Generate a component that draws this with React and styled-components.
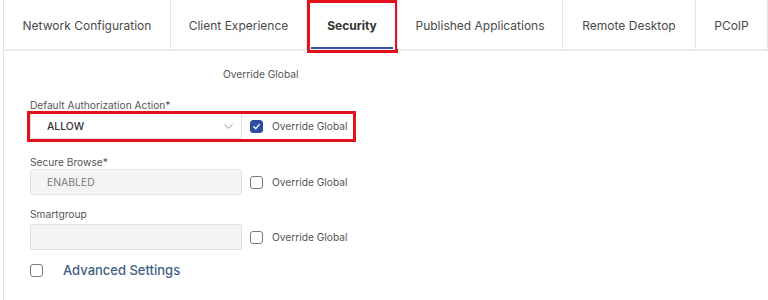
import React from "react";
import styled, { createGlobalStyle, css } from "styled-components";
import { ChevronDown } from "lucide-react";

const GlobalStyle = createGlobalStyle`
  body {
    margin: 0;
    background: #fff;
    font-family: Inter, "Liberation Sans", Arial, sans-serif;
    color: #444;
  }
`;

const Page = styled.div`
  width: 765px;
  height: 300px;
  margin-left: 3px;
  overflow: hidden;
`;

const TabBar = styled.div`
  display: flex;
  height: 49px;
  border-bottom: 2px solid #ececec;
  border-right: 1px solid #e4e4e4;
`;

const Tab = styled.div`
  position: relative;
  display: flex;
  align-items: center;
  justify-content: center;
  width: ${(p) => p.$w}px;
  box-sizing: border-box;
  border-left: 1px solid #e4e4e4;
  padding-top: 2px;
  font-size: 12px;
  color: #4a4a4a;
  white-space: nowrap;
  ${(p) =>
    p.$active &&
    css`
      font-weight: 700;
      color: #333;
      &::after {
        content: "";
        position: absolute;
        left: 4px;
        right: 4px;
        bottom: 0;
        height: 2px;
        background: #3a55a0;
      }
    `}
`;

// red annotation frame drawn over the screenshot
const Mark = styled.div`
  position: absolute;
  left: ${(p) => p.$x || 0}px;
  top: ${(p) => p.$y || 0}px;
  width: ${(p) => p.$w}px;
  height: ${(p) => p.$h}px;
  box-sizing: border-box;
  border: 3px solid #e0121b;
  pointer-events: none;
`;

const Panel = styled.div`
  border-left: 1px solid #e4e4e4;
  padding-left: 26px;
  height: 250px;
`;

const ColumnHead = styled.div`
  padding: 17px 0 0 193px;
  height: 24px;
  font-size: 10.2px;
  color: #555;
`;

const Field = styled.div`
  margin-top: ${(p) => p.$mt}px;
`;

const Label = styled.div`
  font-size: 10.2px;
  color: #555;
  height: 14px;
  line-height: 14px;
`;

const Row = styled.div`
  position: relative;
  display: flex;
  align-items: center;
  gap: 8px;
  margin-top: ${(p) => p.$mt || 0}px;
`;

const Box = styled.div`
  display: flex;
  align-items: center;
  justify-content: space-between;
  box-sizing: border-box;
  width: 212px;
  height: 26px;
  padding: 0 5px 0 16px;
  border: 1px solid ${(p) => (p.$disabled ? "#e2e2e2" : "#dedede")};
  border-radius: 2px;
  background: ${(p) => (p.$disabled ? "#f4f4f4" : "#fff")};
  font-size: 10.4px;
  color: ${(p) => (p.$disabled ? "#7a7a7a" : "#333")};
  font-weight: ${(p) => (p.$disabled ? 400 : 500)};
`;

const Check = styled.span`
  display: inline-flex;
  align-items: center;
  justify-content: center;
  width: 13px;
  height: 13px;
  box-sizing: border-box;
  border-radius: 3px;
  border: 1.5px solid ${(p) => (p.$on ? "#2b4ea3" : "#7a7a7a")};
  background: ${(p) => (p.$on ? "#2b4ea3" : "#fff")};
  flex: none;
`;

const CheckLabel = styled.span`
  font-size: 10.2px;
  color: #555;
`;

const Option = styled.div`
  display: flex;
  align-items: center;
  gap: 9px;
`;

const Advanced = styled.div`
  display: flex;
  align-items: center;
  gap: 20px;
  margin-top: 13px;
  height: 14px;
`;

const AdvancedText = styled.span`
  font-size: 13px;
  font-weight: 500;
  color: #3f5f84;
`;

function Checkbox({ on }) {
  return (
    <Check $on={on}>
      {on && (
        <svg width="9" height="9" viewBox="0 0 10 10">
          <path d="M2 5.3 L4.2 7.4 L8.2 2.6" fill="none" stroke="#fff" strokeWidth="1.5" strokeLinecap="round" strokeLinejoin="round" />
        </svg>
      )}
    </Check>
  );
}

function Override({ on }) {
  return (
    <Option>
      <Checkbox on={on} />
      <CheckLabel>Override Global</CheckLabel>
    </Option>
  );
}

const tabs = [
  { name: "Network Configuration", w: 167 },
  { name: "Client Experience", w: 136 },
  { name: "Security", w: 91, active: true },
  { name: "Published Applications", w: 165 },
  { name: "Remote Desktop", w: 133 },
  { name: "PCoIP", w: 72 },
];

export default function App() {
  return (
    <>
      <GlobalStyle />
      <Page>
        <TabBar>
          {tabs.map((t) => (
            <Tab key={t.name} $w={t.w} $active={t.active}>
              {t.name}
              {t.active && <Mark $w={91} $h={53} />}
            </Tab>
          ))}
        </TabBar>
        <Panel>
          <ColumnHead>Override Global</ColumnHead>
          <Field $mt={6}>
            <Label>Default Authorization Action*</Label>
            <Row $mt={1}>
              <Box>
                ALLOW
                <ChevronDown size={15} color="#8a8a8a" strokeWidth={1.5} />
              </Box>
              <Override on />
              <Mark $x={-3} $y={-2} $w={329} $h={31} />
            </Row>
          </Field>
          <Field $mt={16}>
            <Label>Secure Browse*</Label>
            <Row>
              <Box $disabled>ENABLED</Box>
              <Override />
            </Row>
          </Field>
          <Field $mt={12}>
            <Label>Smartgroup</Label>
            <Row $mt={3}>
              <Box $disabled />
              <Override />
            </Row>
          </Field>
          <Advanced>
            <Checkbox />
            <AdvancedText>Advanced Settings</AdvancedText>
          </Advanced>
        </Panel>
      </Page>
    </>
  );
}
